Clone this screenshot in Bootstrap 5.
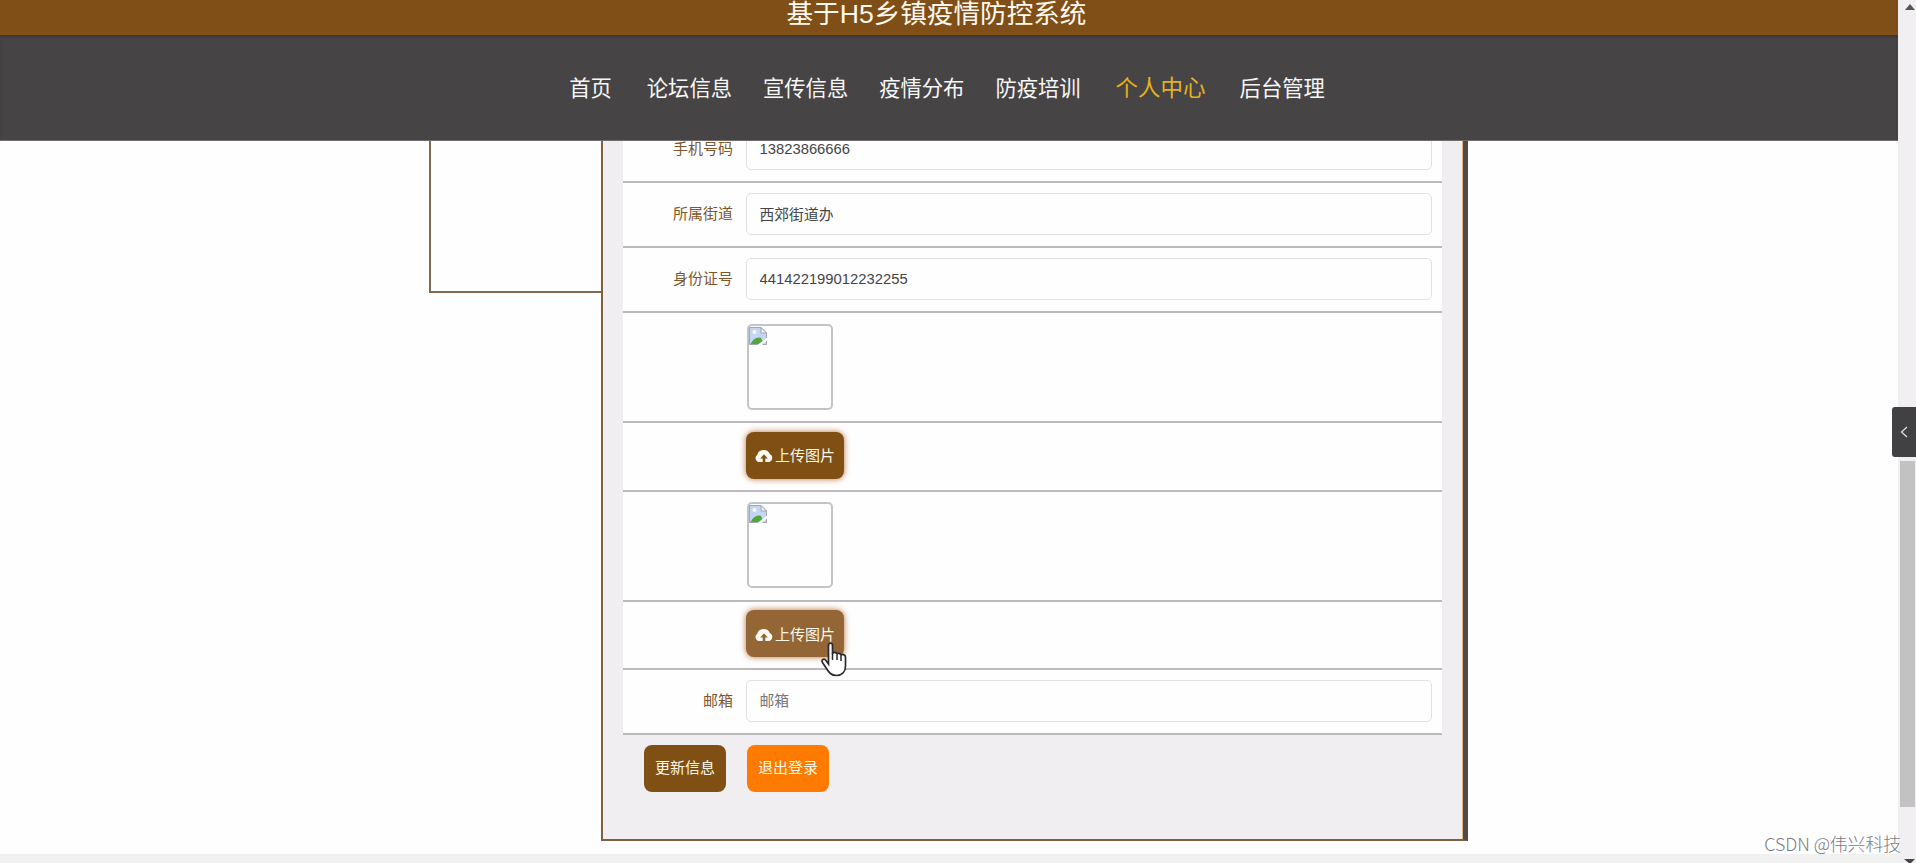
<!DOCTYPE html>
<html lang="zh-CN">
<head>
<meta charset="utf-8">
<title>基于H5乡镇疫情防控系统</title>
<link href="https://cdn.jsdelivr.net/npm/bootstrap@5.3.0/dist/css/bootstrap.min.css" rel="stylesheet">
<style>
body{font-family:"Liberation Sans","Noto Sans CJK SC",sans-serif;background:#fefefe;height:863px;overflow:hidden}
.site-title{height:35px;background:#804f18;color:#fff8ee;font-size:26.6px;line-height:28px;padding-right:25px}
.site-nav{height:106px;background:#474446;border-bottom:1px solid #716e70;box-shadow:inset 0 3px 3px -1px #393637;gap:31px;font-size:21.3px;padding:2px 4px 0 0}
.site-nav .nav-link{color:#f7f7f7;padding:0;line-height:30px}
.site-nav .nav-link.active{color:#e5b21c;font-size:22.5px;margin:0 3px 0 4px}
.page-main{height:713px;padding-left:428px}
.side-box{width:172px;height:152px;margin-left:1px;border:solid #84694a;border-width:0 0 2px 2px}
.form-box{width:867px;height:700px;background:#f0eef1;border:solid #7d6140;border-width:0 5px 2px 2px;border-right-color:#50494a;padding:0 21px 0 20px;box-shadow:inset -1px 0 #dfb780}
.form-rows{margin-top:-23px}
.field-row{height:65px;background:#fefefe;border-bottom:2px solid #bbb9bc;padding:0 10px 1px 0}
.field-row.pic{height:110px}
.field-row.up{height:68.5px}
.field-row label{width:123px;padding-right:13px;text-align:right;color:#80562c;font-size:15px;white-space:nowrap}
.field-row .form-control{width:686px;height:42px;border:1.5px solid #e1e1e4;border-radius:5px;font-size:14.8px;color:#454447;padding:0 12px 1px 12.5px;background:#fefefe}
.field-row .form-control::placeholder{color:#77767a}
.thumb{width:86px;height:86px;border:2px solid #c3c4c8;border-radius:5px;margin-left:1px;padding-top:1px}
.act-btn{height:47px;border:0;border-radius:8px;font-size:15px;color:#fff6e5;background:#804f14;padding:0}
.up-btn{width:98px;margin-bottom:1px;padding-top:2px;box-shadow:0 0 6px #b9713f}
.up-btn svg{margin-right:2px}
.up-btn.hovering{background:#946635}
.form-actions{padding-top:9.5px}
.save-btn,.exit-btn{width:82px}
.save-btn{margin-left:21px}
.exit-btn{background:#ff7b00;margin-left:21px}
.act-btn:hover{color:#fff6e5}
.page-foot{height:9px;background:#f1f1f1}
.scroll-rail{width:18px;background:#f1eff2}
.scroll-thumb{width:15px;height:346px;background:#c2c2c2;top:461px;left:2px}
.drawer-tab{width:24px;height:50px;right:0;top:407px;background:#414042;border-radius:3px 0 0 3px}
.watermark{right:15px;bottom:6px;font-size:17.9px;line-height:28px;color:#7c7c7e;font-family:"Noto Sans CJK SC",sans-serif;font-weight:300;letter-spacing:-.1px;white-space:nowrap}
.hand{left:819px;top:640px}
</style>
<script src="https://cdn.jsdelivr.net/npm/bootstrap@5.3.0/dist/js/bootstrap.bundle.min.js"></script>
</head>
<body class="d-flex position-relative">
<svg width="0" height="0" class="position-absolute">
  <symbol id="broken" viewBox="0 0 18 18">
    <path d="M.5.5H12L17.500 6V17.500H.5z" fill="#c4d5f5" stroke="#a2a5ab"/>
    <path d="M12 .5V6h5.500z" fill="#f4f4f6" stroke="#a2a5ab"/>
    <circle cx="5.500" cy="5" r="2" fill="#fff"/>
    <path d="M1.500 17C4 12 8 9.500 12 11l3 6z" fill="#50a83c"/>
    <path d="M8.500 18 18 10.500v3L13 18z" fill="#fefefe"/>
  </symbol>
  <symbol id="cloud" viewBox="0 0 18 14">
    <path fill="#fff9ef" d="M4.500 13A4 4 0 0 1 2.300 5.700 6.500 6 0 0 1 14.800 5 4.200 4.200 0 0 1 13.500 13H10.300V9.500h2.500L9 5.200 5.200 9.500h2.500V13z"/>
  </symbol>
</svg>
<div class="flex-grow-1">
  <header>
    <div class="site-title text-center">基于H5乡镇疫情防控系统</div>
    <nav class="site-nav nav d-flex justify-content-center align-items-center flex-nowrap">
      <a class="nav-link me-1" href="#">首页</a>
      <a class="nav-link" href="#">论坛信息</a>
      <a class="nav-link" href="#">宣传信息</a>
      <a class="nav-link" href="#">疫情分布</a>
      <a class="nav-link" href="#">防疫培训</a>
      <a class="nav-link active" href="#">个人中心</a>
      <a class="nav-link" href="#">后台管理</a>
    </nav>
  </header>
  <main class="page-main d-flex align-items-start overflow-hidden">
    <aside class="side-box"></aside>
    <section class="form-box">
      <div class="form-rows">
        <div class="field-row d-flex align-items-center"><label>手机号码</label><input class="form-control" value="13823866666"></div>
        <div class="field-row d-flex align-items-center"><label>所属街道</label><input class="form-control" value="西郊街道办"></div>
        <div class="field-row d-flex align-items-center"><label>身份证号</label><input class="form-control" value="441422199012232255"></div>
        <div class="field-row pic d-flex align-items-center"><label></label><div class="thumb d-flex align-items-start"><svg width="18" height="18"><use href="#broken"/></svg></div></div>
        <div class="field-row up d-flex align-items-center"><label></label><button class="btn act-btn up-btn d-flex align-items-center justify-content-center"><svg width="18" height="14"><use href="#cloud"/></svg>上传图片</button></div>
        <div class="field-row pic d-flex align-items-center"><label></label><div class="thumb d-flex align-items-start"><svg width="18" height="18"><use href="#broken"/></svg></div></div>
        <div class="field-row up d-flex align-items-center"><label></label><button class="btn act-btn up-btn hovering d-flex align-items-center justify-content-center"><svg width="18" height="14"><use href="#cloud"/></svg>上传图片</button></div>
        <div class="field-row d-flex align-items-center"><label>邮箱</label><input class="form-control" placeholder="邮箱"></div>
      </div>
      <div class="form-actions d-flex"><button class="btn act-btn save-btn">更新信息</button><button class="btn act-btn exit-btn">退出登录</button></div>
    </section>
  </main>
  <footer class="page-foot"></footer>
</div>
<div class="scroll-rail position-relative flex-shrink-0">
  <svg class="position-absolute start-0 top-0" width="18" height="12"><path d="M7 10 12 4l5 6z" fill="#555"/></svg>
  <div class="scroll-thumb position-absolute"></div>
  <svg class="position-absolute start-0 bottom-0" width="18" height="5"><path d="M6 1h11l-5 5z" fill="#454545"/></svg>
</div>
<div class="drawer-tab position-absolute d-flex align-items-center justify-content-center"><svg width="8" height="12" fill="none" stroke="#ddd" stroke-width="1.300"><path d="M7 1 1.500 6 7 11"/></svg></div>
<div class="watermark position-absolute">CSDN @伟兴科技</div>
<svg class="hand position-absolute" width="30" height="40" viewBox="0 0 30 40"><path d="M9.500 24V5.500C9.500 2.500 13.500 2.500 13.500 5.500V14C14 11.500 18 12 18 14.500 18.500 12.500 22 13 22 15.500 23 13.500 26.500 14.500 26.500 17.500V26C26.500 32 23 35.500 17.500 35.500 12 35.500 10 32.500 7.500 28.500L3.500 22.500C2 19.500 5 18 7 20.500z" fill="#fff" stroke="#29292e" stroke-width="1.700"/><path d="M13.500 13v7M18 14.500V20M22 15.500V21" stroke="#29292e" stroke-width="1.500"/></svg>
</body>
</html>
